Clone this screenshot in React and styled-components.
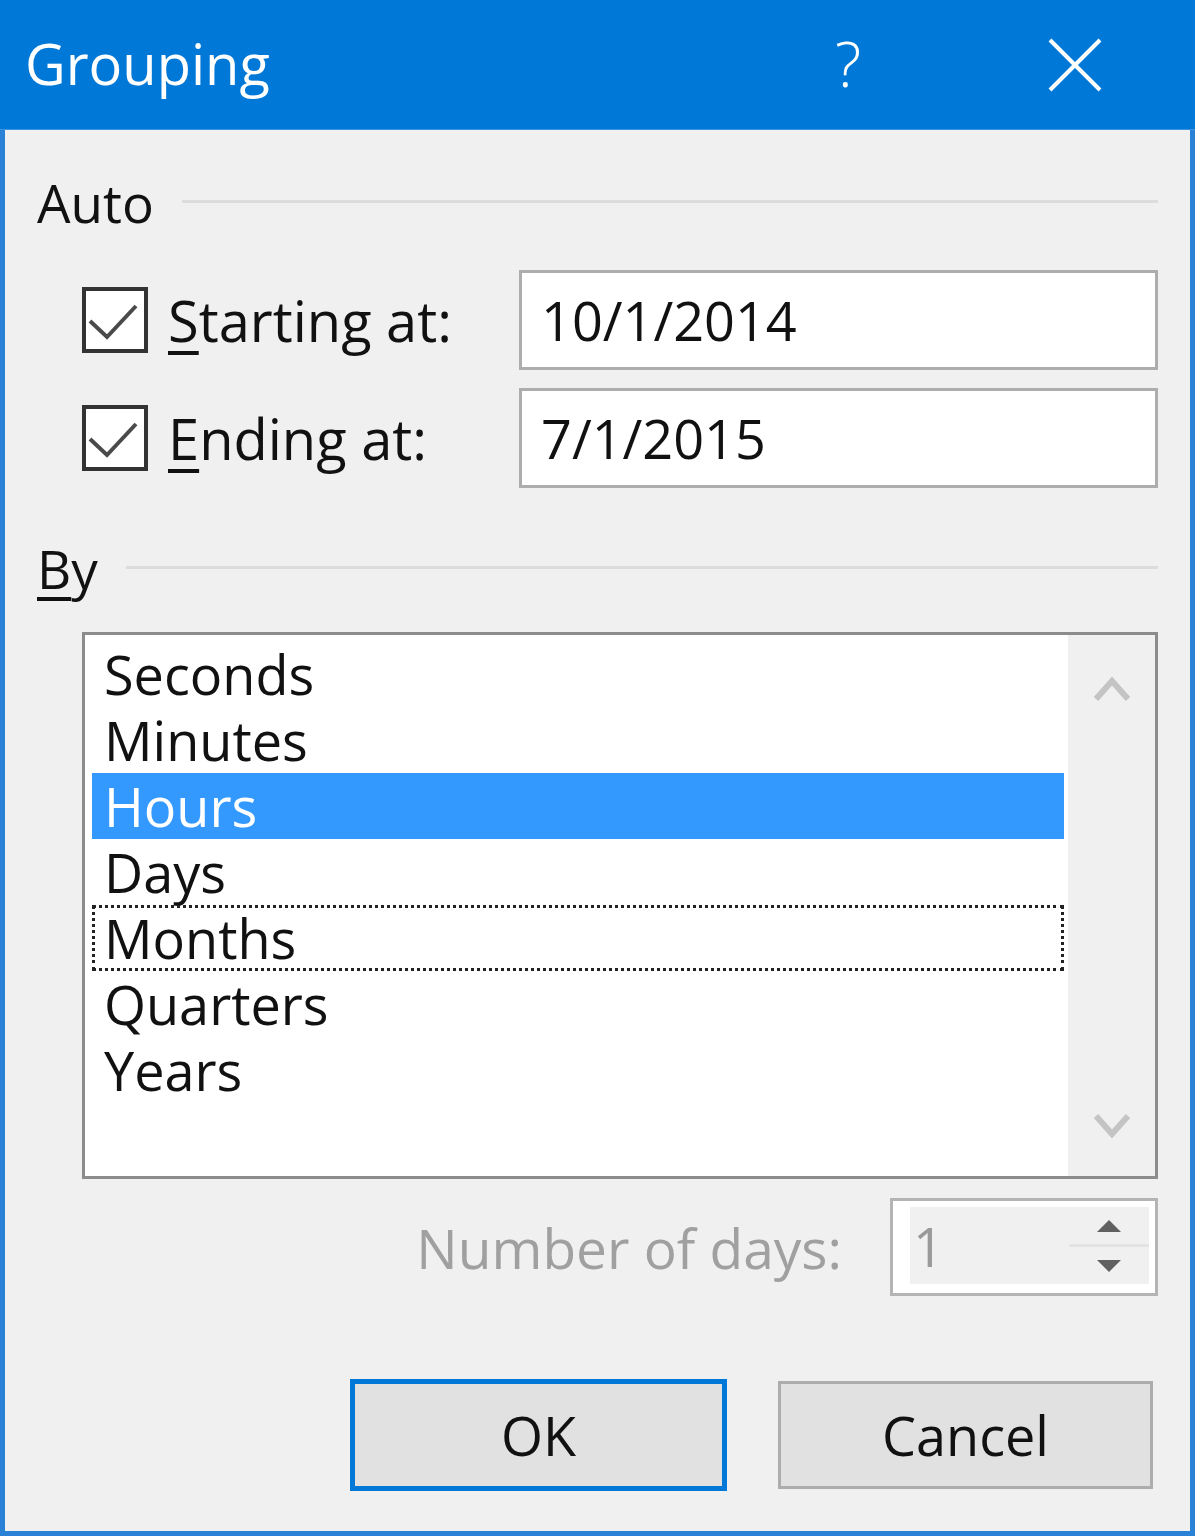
import styled, { createGlobalStyle } from 'styled-components';

const GlobalStyle = createGlobalStyle`
  html, body {
    margin: 0;
    padding: 0;
    background: #f0f0f0;
  }
  * { box-sizing: border-box; }
`;

const units = ['Seconds', 'Minutes', 'Hours', 'Days', 'Months', 'Quarters', 'Years'];

function CheckBox() {
    return (
        <Box>
            <svg width="58" height="58" viewBox="0 0 58 58">
                <path d="M4 30 L21 46 L50 15" fill="none" stroke="#4a4a4a" strokeWidth="4" />
            </svg>
        </Box>
    );
}

function App() {
    return (
        <Window>
            <GlobalStyle />
            <TitleBar>
                <Title>Grouping</Title>
                <TitleButtons>
                    <HelpMark>?</HelpMark>
                    <svg width="56" height="56" viewBox="0 0 56 56">
                        <path d="M3 3 L53 53 M53 3 L3 53" stroke="#fff" strokeWidth="4" />
                    </svg>
                </TitleButtons>
            </TitleBar>
            <Body>
                <SectionHeader top={45}>
                    <span>Auto</span>
                    <Rule />
                </SectionHeader>
                <DateGrid>
                    <CheckLabel>
                        <CheckBox />
                        <span><u>S</u>tarting at:</span>
                    </CheckLabel>
                    <TextField>10/1/2014</TextField>
                    <CheckLabel>
                        <CheckBox />
                        <span><u>E</u>nding at:</span>
                    </CheckLabel>
                    <TextField>7/1/2015</TextField>
                </DateGrid>
                <SectionHeader top={53}>
                    <span><u>B</u>y</span>
                    <Rule />
                </SectionHeader>
                <ListBox>
                    <Items>
                        {units.map((u) => (
                            <Item key={u} selected={u === 'Hours'} focused={u === 'Months'}>
                                {u}
                            </Item>
                        ))}
                    </Items>
                    <ScrollBar>
                        <svg width="40" height="30" viewBox="0 0 40 30">
                            <path d="M4 26 L20 8 L36 26" fill="none" stroke="#c4c4c4" strokeWidth="6" />
                        </svg>
                        <svg width="40" height="30" viewBox="0 0 40 30">
                            <path d="M4 4 L20 22 L36 4" fill="none" stroke="#c4c4c4" strokeWidth="6" />
                        </svg>
                    </ScrollBar>
                </ListBox>
                <SpinRow>
                    <DimLabel>Number of days:</DimLabel>
                    <Spinner>
                        <SpinField>1</SpinField>
                        <SpinButtons>
                            <SpinButton>
                                <svg width="28" height="14" viewBox="0 0 28 14">
                                    <path d="M2 13 L14 1 L26 13 Z" fill="#606060" />
                                </svg>
                            </SpinButton>
                            <SpinButton>
                                <svg width="28" height="14" viewBox="0 0 28 14">
                                    <path d="M2 1 L14 13 L26 1 Z" fill="#606060" />
                                </svg>
                            </SpinButton>
                        </SpinButtons>
                    </Spinner>
                </SpinRow>
                <ButtonRow>
                    <Button primary>OK</Button>
                    <Button>Cancel</Button>
                </ButtonRow>
            </Body>
        </Window>
    );
}

export default App;

const Window = styled.div`
    width: 1195px;
    height: 1536px;
    border: 5px solid #2a82d6;
    border-top: none;
    background: #f0f0f0;
    display: flex;
    flex-direction: column;
    font-family: "Open Sans", "Noto Sans", sans-serif;
    color: #000;
`;

const TitleBar = styled.div`
    height: 130px;
    background: #0078d7;
    margin: 0 -5px;
    padding: 0 92px 0 25px;
    display: flex;
    align-items: center;
    justify-content: space-between;
    border-bottom: 1px solid #3d93e0;
`;

const Title = styled.div`
    color: #fff;
    font-size: 56px;
    line-height: 1;
    padding-bottom: 4px;
`;

const TitleButtons = styled.div`
    display: flex;
    align-items: center;
    gap: 186px;
`;

const HelpMark = styled.div`
    color: #fff;
    font-size: 62px;
    line-height: 1;
    font-weight: 300;
    padding-bottom: 4px;
`;

const Body = styled.div`
    flex: 1;
    display: flex;
    flex-direction: column;
    padding: 0 32px 0 32px;
`;

const SectionHeader = styled.div`
    margin-top: ${(p) => p.top}px;
    height: 56px;
    display: flex;
    align-items: center;
    gap: 28px;
    font-size: 53px;
    line-height: 56px;
    color: #111;
    u { text-underline-offset: 8px; text-decoration-thickness: 4px; }
`;

const Rule = styled.div`
    flex: 1;
    height: 3px;
    background: #dcdcdc;
    margin-top: -4px;
`;

const DateGrid = styled.div`
    margin-top: 39px;
    display: grid;
    grid-template-columns: 482px 1fr;
    row-gap: 18px;
    align-items: center;
`;

const CheckLabel = styled.div`
    padding-left: 45px;
    display: flex;
    align-items: center;
    gap: 20px;
    font-size: 56px;
    line-height: 1;
    color: #111;
    u { text-underline-offset: 9px; text-decoration-thickness: 4px; }
`;

const Box = styled.div`
    width: 66px;
    height: 66px;
    border: 4px solid #333;
    background: #fff;
    display: flex;
    align-items: center;
    justify-content: center;
`;

const TextField = styled.div`
    height: 100px;
    border: 3px solid #adadad;
    background: #fff;
    display: flex;
    align-items: center;
    padding-left: 19px;
    font-size: 54px;
    line-height: 1;
    color: #111;
`;

const ListBox = styled.div`
    margin: 35px 0 0 45px;
    height: 547px;
    border: 3px solid #8c8c8c;
    background: #fff;
    display: flex;
`;

const Items = styled.div`
    flex: 1;
    padding: 6px 4px 0 7px;
    display: flex;
    flex-direction: column;
`;

const Item = styled.div`
    height: 66px;
    padding-left: 12px;
    display: flex;
    align-items: center;
    font-size: 54px;
    line-height: 1;
    color: ${(p) => (p.selected ? '#fff' : '#111')};
    background: ${(p) => (p.selected ? '#3399ff' : 'transparent')};
    outline: ${(p) => (p.focused ? '3px dotted #222' : 'none')};
    outline-offset: -3px;
`;

const ScrollBar = styled.div`
    width: 87px;
    background: #f0f0f0;
    display: flex;
    flex-direction: column;
    justify-content: space-between;
    align-items: center;
    padding: 38px 0 34px;
`;

const SpinRow = styled.div`
    margin-top: 19px;
    display: flex;
    justify-content: flex-end;
    align-items: center;
    gap: 48px;
`;

const DimLabel = styled.div`
    font-size: 55px;
    line-height: 1;
    color: #a0a0a0;
`;

const Spinner = styled.div`
    width: 268px;
    height: 98px;
    border: 3px solid #b4b4b4;
    background: #fff;
    padding: 6px 6px 9px 17px;
    display: flex;
`;

const SpinField = styled.div`
    flex: 1;
    background: #f0f0f0;
    font-size: 54px;
    line-height: 1;
    color: #9a9a9a;
    display: flex;
    align-items: center;
    padding-left: 3px;
`;

const SpinButtons = styled.div`
    width: 80px;
    display: flex;
    flex-direction: column;
    gap: 3px;
    background: #e3e3e3;
`;

const SpinButton = styled.div`
    flex: 1;
    background: #f0f0f0;
    display: flex;
    align-items: center;
    justify-content: center;
`;

const ButtonRow = styled.div`
    margin-top: 83px;
    padding-right: 5px;
    display: flex;
    justify-content: flex-end;
    align-items: center;
    gap: 51px;
`;

const Button = styled.div`
    width: ${(p) => (p.primary ? 377 : 375)}px;
    height: ${(p) => (p.primary ? 112 : 108)}px;
    border: ${(p) => (p.primary ? '5px solid #0078d7' : '3px solid #adadad')};
    background: #e1e1e1;
    display: flex;
    align-items: center;
    justify-content: center;
    font-size: 54px;
    line-height: 1;
    color: #111;
`;
